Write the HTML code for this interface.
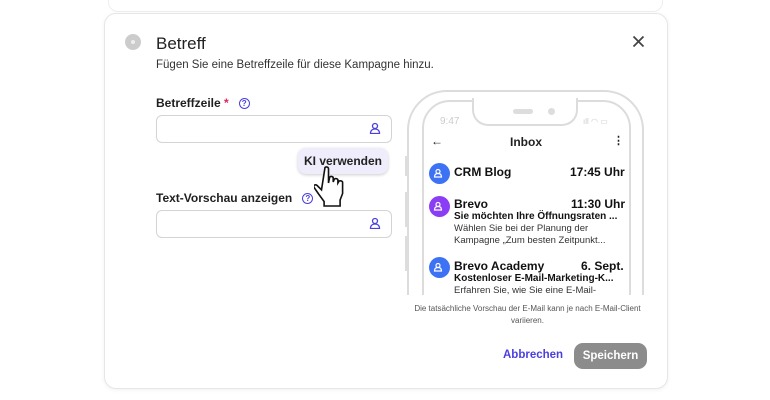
<!DOCTYPE html>
<html><head><style>
*{margin:0;padding:0;box-sizing:border-box}
body{width:770px;height:400px;background:#fff;font-family:"Liberation Sans",sans-serif;position:relative;overflow:hidden;color:#1f1f1f}
.abs{position:absolute}
.top{left:108px;top:-10px;width:555px;height:22px;border:1px solid #eee;border-radius:10px}
.card{left:104px;top:13px;width:564px;height:376px;border:1px solid #e6e6e6;border-radius:12px;background:#fff;box-shadow:0 1px 4px rgba(0,0,0,.06)}
.inp{left:156px;width:236px;height:28px;border:1px solid #d4d4d4;border-radius:6px;background:#fff}
.lbl{font-weight:bold;font-size:12px;color:#1f1f1f}
.q{display:inline-block;width:11px;height:11px;border:1.3px solid #4b3fe0;border-radius:50%;font-size:8px;color:#4b3fe0;text-align:center;line-height:9px;font-weight:bold;vertical-align:1px}
.av{width:21px;height:21px;border-radius:50%}
.t{font-size:12px;font-weight:bold;color:#111}
.s{font-size:10px;font-weight:bold;color:#111}
.p{font-size:9.5px;color:#333}
</style></head><body>
<div class="abs top"></div>
<div class="abs card"></div>
<div class="abs" style="left:125px;top:34px;width:16px;height:16px;border-radius:50%;background:#ccc"><div style="margin:6px;width:4px;height:4px;border-radius:50%;background:#eee"></div></div>
<div class="abs" style="left:156px;top:34px;font-size:17px;color:#222">Betreff</div>
<div class="abs" style="left:156px;top:59px;font-size:11.5px;color:#333">Fügen Sie eine Betreffzeile für diese Kampagne hinzu.</div>
<svg class="abs" style="left:632px;top:35px" width="13" height="13"><path d="M1.5 1.5L11.5 11.5M11.5 1.5L1.5 11.5" stroke="#444" stroke-width="1.8"/></svg>
<div class="abs lbl" style="left:156px;top:96px">Betreffzeile <span style="color:#e0245e">*</span>&nbsp;&nbsp; <span class="q">?</span></div>
<div class="abs inp" style="top:115px"></div>
<svg class="abs" style="left:369px;top:122px" width="12" height="12"><circle cx="6" cy="4" r="2.5" fill="none" stroke="#4b3fe0" stroke-width="1.3"/><path d="M1.5 11.5c0-3 2-4.5 4.5-4.5s4.5 1.5 4.5 4.5z" fill="none" stroke="#4b3fe0" stroke-width="1.3"/></svg>
<div class="abs" style="left:298px;top:148px;width:90px;height:26px;border-radius:8px;background:#efedfb;box-shadow:0 1px 3px rgba(0,0,0,.2);font-size:12px;font-weight:bold;text-align:center;line-height:26px;color:#222">KI verwenden</div>
<svg class="abs" style="left:314px;top:165px" width="40" height="48"><path d="M11 2.5c1.5-1 3.5-0.5 3.5 1.5v14l1.2-6c1.5-1 3.5-0.5 3.5 1v4l1.2-3c1.5-1 3.5 0 3.5 1v3l1.2-2c1.5-.5 3.5 0 3.5 1.5v11l-2.5 6.5v6h-16v-4.5l-5.5-7.5-4.5-6.5c-1-2 1-3.5 2.8-2.2l4.6 4.5z" fill="#fff" stroke="#111" stroke-width="1.6"/></svg>
<div class="abs lbl" style="left:156px;top:191px">Text-Vorschau anzeigen&nbsp;&nbsp; <span class="q">?</span></div>
<div class="abs inp" style="top:210px"></div>
<svg class="abs" style="left:369px;top:217px" width="12" height="12"><circle cx="6" cy="4" r="2.5" fill="none" stroke="#4b3fe0" stroke-width="1.3"/><path d="M1.5 11.5c0-3 2-4.5 4.5-4.5s4.5 1.5 4.5 4.5z" fill="none" stroke="#4b3fe0" stroke-width="1.3"/></svg>

<!-- phone -->
<div class="abs" style="left:400px;top:80px;width:255px;height:215px;overflow:hidden">
 <div class="abs" style="left:7px;top:10px;width:237px;height:300px;border:2px solid #dcdcdc;border-radius:40px"></div>
 <div class="abs" style="left:5px;top:76px;width:3px;height:20px;background:#ddd"></div>
 <div class="abs" style="left:5px;top:112px;width:3px;height:35px;background:#ddd"></div>
 <div class="abs" style="left:5px;top:156px;width:3px;height:35px;background:#ddd"></div>
 <div class="abs" style="left:22px;top:20px;width:209px;height:300px;border:2px solid #dcdcdc;border-radius:28px"></div>
 <div class="abs" style="left:72px;top:18px;width:106px;height:28px;background:#fff;border:2px solid #dcdcdc;border-top:none;border-radius:0 0 16px 16px"></div>
 <div class="abs" style="left:113px;top:29px;width:20px;height:5px;border-radius:3px;background:#ddd"></div>
 <div class="abs" style="left:148px;top:28px;width:7px;height:7px;border-radius:50%;background:#ddd"></div>
 <div class="abs" style="left:40px;top:36px;font-size:10px;color:#ccc">9:47</div>
 <div class="abs" style="left:183px;top:37px;font-size:8px;color:#ccc">ıll ◠ ▭</div>
 <div class="abs" style="left:31px;top:54px;font-size:12px;font-weight:bold">←</div>
 <div class="abs" style="left:110px;top:55px;font-size:12px;font-weight:bold">Inbox</div>
 <div class="abs" style="left:213px;top:54px;font-size:11px;font-weight:bold">⋮</div>
 <div class="abs av" style="left:29px;top:83px;background:#3d72f5"></div>
 <div class="abs t" style="left:54px;top:85px">CRM Blog</div>
 <div class="abs t" style="left:170px;top:85px">17:45 Uhr</div>
 <div class="abs av" style="left:29px;top:116px;background:#8b3df5"></div>
 <div class="abs t" style="left:54px;top:117px">Brevo</div>
 <div class="abs t" style="left:171px;top:117px">11:30 Uhr</div>
 <div class="abs s" style="left:54px;top:131px">Sie möchten Ihre Öffnungsraten ...</div>
 <div class="abs p" style="left:54px;top:143px">Wählen Sie bei der Planung der</div>
 <div class="abs p" style="left:54px;top:155px">Kampagne „Zum besten Zeitpunkt...</div>
 <div class="abs av" style="left:29px;top:177px;background:#3d72f5"></div>
 <div class="abs t" style="left:54px;top:179px">Brevo Academy</div>
 <div class="abs t" style="left:181px;top:179px">6. Sept.</div>
 <div class="abs s" style="left:54px;top:193px">Kostenloser E-Mail-Marketing-K...</div>
 <div class="abs p" style="left:54px;top:205px">Erfahren Sie, wie Sie eine E-Mail-</div>
</div>
<svg class="abs" style="left:433px;top:168px" width="10" height="10"><circle cx="5" cy="3.5" r="2" fill="none" stroke="#fff" stroke-width="1.2"/><path d="M1.5 9c0-2.5 1.5-3.5 3.5-3.5s3.5 1 3.5 3.5z" fill="none" stroke="#fff" stroke-width="1.2"/></svg>
<svg class="abs" style="left:433px;top:201px" width="10" height="10"><circle cx="5" cy="3.5" r="2" fill="none" stroke="#fff" stroke-width="1.2"/><path d="M1.5 9c0-2.5 1.5-3.5 3.5-3.5s3.5 1 3.5 3.5z" fill="none" stroke="#fff" stroke-width="1.2"/></svg>
<svg class="abs" style="left:433px;top:262px" width="10" height="10"><circle cx="5" cy="3.5" r="2" fill="none" stroke="#fff" stroke-width="1.2"/><path d="M1.5 9c0-2.5 1.5-3.5 3.5-3.5s3.5 1 3.5 3.5z" fill="none" stroke="#fff" stroke-width="1.2"/></svg>
<div class="abs" style="left:400px;top:303px;width:255px;text-align:center;font-size:8px;color:#555;line-height:12px">Die tatsächliche Vorschau der E-Mail kann je nach E-Mail-Client<br>variieren.</div>
<div class="abs" style="left:503px;top:349px;font-size:11.5px;font-weight:bold;color:#4b3fe0">Abbrechen</div>
<div class="abs" style="left:574px;top:343px;width:73px;height:26px;border-radius:9px;background:#8c8c8c;color:#fff;font-size:11.5px;font-weight:bold;text-align:center;line-height:26px">Speichern</div>
</body></html>
